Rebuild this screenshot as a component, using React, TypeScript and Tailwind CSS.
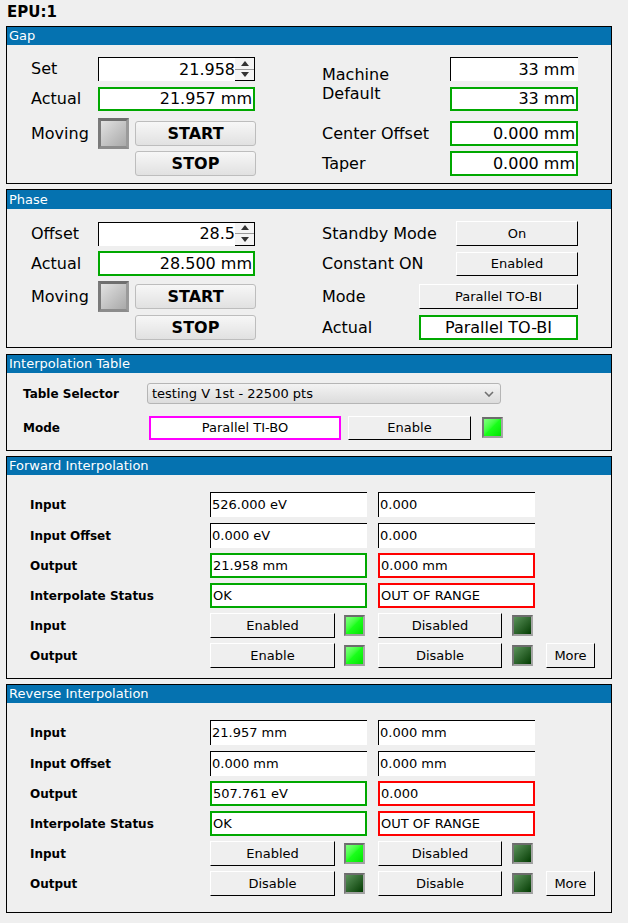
import React from 'react';

// Qt/PyDM style EPU control screen

function Panel({ title, tall = false, children }: { title: string; tall?: boolean; children: React.ReactNode }) {
  return (
    <div className="border border-black">
      <div
        className={`${tall ? 'h-[19px]' : 'h-[18px]'} bg-[#0572b0] text-white text-[13px] flex items-center pl-[2px]`}
      >
        {title}
      </div>
      {children}
    </div>
  );
}

function SpinBox({ value }: { value: string }) {
  return (
    <div className="flex h-[24px] w-[157px] bg-white border-t border-l border-black">
      <div className="flex-1 flex items-center justify-end text-[16px]">{value}</div>
      <div className="w-[20px] flex flex-col border-r border-black">
        <div className="flex-1 flex items-center justify-center bg-[#f4f4f4] border-b border-[#9a9a9a]">
          <svg width="8" height="5" viewBox="0 0 8 5">
            <path d="M0 5 L4 0 L8 5 Z" fill="#333" />
          </svg>
        </div>
        <div className="flex-1 flex items-center justify-center bg-[#f4f4f4] border-b border-black">
          <svg width="8" height="5" viewBox="0 0 8 5">
            <path d="M0 0 L4 5 L8 0 Z" fill="#333" />
          </svg>
        </div>
      </div>
    </div>
  );
}

function LineEdit({ value, className }: { value: string; className: string }) {
  return (
    <div className={`flex items-center bg-white border-t border-l border-black ${className}`}>{value}</div>
  );
}

function Readback({
  value,
  color,
  className,
}: {
  value: string;
  color: 'green' | 'red' | 'magenta';
  className: string;
}) {
  const border =
    color === 'green' ? 'border-[#00a800]' : color === 'red' ? 'border-[#ff0000]' : 'border-[#ff00ff]';
  return <div className={`flex items-center bg-white border-2 ${border} ${className}`}>{value}</div>;
}

function RaisedButton({ label, className }: { label: string; className: string }) {
  return (
    <div
      className={`flex items-center justify-center bg-[#efefef] border border-t-white border-l-white border-r-black border-b-black text-[13px] ${className}`}
    >
      {label}
    </div>
  );
}

function BigButton({ label }: { label: string }) {
  return (
    <div className="w-[121px] h-[25px] flex items-center justify-center rounded-[3px] border border-[#bdbdbd] bg-linear-to-b from-[#f7f7f7] to-[#e1e1e1] font-bold text-[16px]">
      {label}
    </div>
  );
}

function MovingLed() {
  return (
    <div className="w-[31px] h-[31px] border-[3px] border-t-[#6e6e6e] border-l-[#7a7a7a] border-r-[#9a9a9a] border-b-[#8c8c8c] bg-linear-to-br from-[#e2e2e2] to-[#a9a9a9]" />
  );
}

function Led({ on }: { on: boolean }) {
  return (
    <div
      className={`w-[21px] h-[21px] border-2 border-t-[#6c6c6c] border-l-[#767676] border-r-[#a6a6a6] border-b-[#a0a0a0] ${
        on
          ? 'bg-linear-to-br from-[#7dff7d] via-[#1aff1a] to-[#00e400]'
          : 'bg-linear-to-br from-[#5a935a] to-[#003d00]'
      }`}
    />
  );
}

interface InterpData {
  input: [string, string];
  offset: [string, string];
  output: [string, string];
  status: [string, string];
  inBtn: [string, string];
  inLed: [boolean, boolean];
  outBtn: [string, string];
  outLed: [boolean, boolean];
}

function InterpPanel({ title, data, bottomPad }: { title: string; data: InterpData; bottomPad: string }) {
  const label = 'w-[180px] font-bold text-[12px]';
  const field = 'w-[157px] h-[25px] text-[13px] pl-[1px]';
  return (
    <Panel title={title}>
      <div className={`pl-[23px] pt-[17px] ${bottomPad} flex flex-col`}>
        <div className="flex items-center h-[25px]">
          <span className={label}>Input</span>
          <LineEdit value={data.input[0]} className={field} />
          <LineEdit value={data.input[1]} className={`${field} ml-[11px]`} />
        </div>
        <div className="mt-[6px] flex items-center h-[25px]">
          <span className={label}>Input Offset</span>
          <LineEdit value={data.offset[0]} className={field} />
          <LineEdit value={data.offset[1]} className={`${field} ml-[11px]`} />
        </div>
        <div className="mt-[5px] flex items-center h-[25px]">
          <span className={label}>Output</span>
          <Readback value={data.output[0]} color="green" className={field} />
          <Readback value={data.output[1]} color="red" className={`${field} ml-[11px]`} />
        </div>
        <div className="mt-[5px] flex items-center h-[25px]">
          <span className={label}>Interpolate Status</span>
          <Readback value={data.status[0]} color="green" className={field} />
          <Readback value={data.status[1]} color="red" className={`${field} ml-[11px]`} />
        </div>
        <div className="mt-[5px] flex items-center h-[25px]">
          <span className={label}>Input</span>
          <RaisedButton label={data.inBtn[0]} className="w-[125px] h-[25px]" />
          <div className="ml-[9px]">
            <Led on={data.inLed[0]} />
          </div>
          <RaisedButton label={data.inBtn[1]} className="ml-[13px] w-[124px] h-[25px]" />
          <div className="ml-[10px]">
            <Led on={data.inLed[1]} />
          </div>
        </div>
        <div className="mt-[5px] flex items-center h-[25px]">
          <span className={label}>Output</span>
          <RaisedButton label={data.outBtn[0]} className="w-[125px] h-[25px]" />
          <div className="ml-[9px]">
            <Led on={data.outLed[0]} />
          </div>
          <RaisedButton label={data.outBtn[1]} className="ml-[13px] w-[124px] h-[25px]" />
          <div className="ml-[10px]">
            <Led on={data.outLed[1]} />
          </div>
          <RaisedButton label="More" className="ml-[13px] w-[49px] h-[25px]" />
        </div>
      </div>
    </Panel>
  );
}

export default function App() {
  const forward: InterpData = {
    input: ['526.000 eV', '0.000'],
    offset: ['0.000 eV', '0.000'],
    output: ['21.958 mm', '0.000 mm'],
    status: ['OK', 'OUT OF RANGE'],
    inBtn: ['Enabled', 'Disabled'],
    inLed: [true, false],
    outBtn: ['Enable', 'Disable'],
    outLed: [true, false],
  };
  const reverse: InterpData = {
    input: ['21.957 mm', '0.000 mm'],
    offset: ['0.000 mm', '0.000 mm'],
    output: ['507.761 eV', '0.000'],
    status: ['OK', 'OUT OF RANGE'],
    inBtn: ['Enabled', 'Disabled'],
    inLed: [true, false],
    outBtn: ['Disable', 'Disable'],
    outLed: [false, false],
  };

  return (
    <div className="w-[628px] h-[923px] bg-[#efefef] font-['DejaVu_Sans',sans-serif] text-black pl-[6px] pt-[3px] overflow-hidden">
      <div className="text-[15px] font-bold leading-[18px] pl-[1px]">EPU:1</div>

      <div className="mt-[5px] w-[606px] flex flex-col">
        {/* Gap */}
        <Panel title="Gap">
          <div className="flex pl-[24px] pt-[12px] pb-[7px] text-[16px]">
            <div className="w-[225px]">
              <div className="flex items-center h-[24px]">
                <span className="w-[67px]">Set</span>
                <SpinBox value="21.958" />
              </div>
              <div className="mt-[6px] flex items-center h-[24px]">
                <span className="w-[67px]">Actual</span>
                <Readback value="21.957 mm" color="green" className="w-[157px] h-[24px] justify-end pr-[1px]" />
              </div>
              <div className="mt-[7px] flex">
                <span className="w-[67px] h-[31px] flex items-center">Moving</span>
                <MovingLed />
                <div className="ml-[6px] pt-[3px] flex flex-col gap-[5px]">
                  <BigButton label="START" />
                  <BigButton label="STOP" />
                </div>
              </div>
            </div>
            <div className="ml-[66px]">
              <div className="flex">
                <div className="w-[128px] flex items-center leading-[19px]">
                  Machine
                  <br />
                  Default
                </div>
                <div className="flex flex-col gap-[6px]">
                  <LineEdit value="33 mm" className="w-[128px] h-[24px] justify-end pr-[3px]" />
                  <Readback value="33 mm" color="green" className="w-[128px] h-[24px] justify-end pr-[1px]" />
                </div>
              </div>
              <div className="mt-[10px] flex items-center h-[25px]">
                <span className="w-[128px]">Center Offset</span>
                <Readback value="0.000 mm" color="green" className="w-[128px] h-[25px] justify-end pr-[1px]" />
              </div>
              <div className="mt-[5px] flex items-center h-[25px]">
                <span className="w-[128px]">Taper</span>
                <Readback value="0.000 mm" color="green" className="w-[128px] h-[25px] justify-end pr-[1px]" />
              </div>
            </div>
          </div>
        </Panel>

        {/* Phase */}
        <div className="mt-[5px]">
          <Panel title="Phase" tall>
            <div className="flex pl-[24px] pt-[12px] pb-[7px] text-[16px]">
              <div className="w-[225px]">
                <div className="flex items-center h-[25px]">
                  <span className="w-[67px]">Offset</span>
                  <SpinBox value="28.5" />
                </div>
                <div className="mt-[5px] flex items-center h-[25px]">
                  <span className="w-[67px]">Actual</span>
                  <Readback value="28.500 mm" color="green" className="w-[157px] h-[25px] justify-end pr-[1px]" />
                </div>
                <div className="mt-[5px] flex">
                  <span className="w-[67px] h-[31px] flex items-center">Moving</span>
                  <MovingLed />
                  <div className="ml-[6px] pt-[3px] flex flex-col gap-[6px]">
                    <BigButton label="START" />
                    <BigButton label="STOP" />
                  </div>
                </div>
              </div>
              <div className="ml-[66px]">
                <div className="flex items-center h-[25px]">
                  <span className="w-[134px]">Standby Mode</span>
                  <RaisedButton label="On" className="w-[122px] h-[25px]" />
                </div>
                <div className="mt-[6px] flex items-center h-[24px]">
                  <span className="w-[134px]">Constant ON</span>
                  <RaisedButton label="Enabled" className="w-[122px] h-[24px]" />
                </div>
                <div className="mt-[8px] flex items-center h-[25px]">
                  <span className="w-[97px]">Mode</span>
                  <RaisedButton label="Parallel TO-BI" className="w-[159px] h-[25px]" />
                </div>
                <div className="mt-[6px] flex items-center h-[25px]">
                  <span className="w-[97px]">Actual</span>
                  <Readback value="Parallel TO-BI" color="green" className="w-[159px] h-[25px] justify-center" />
                </div>
              </div>
            </div>
          </Panel>
        </div>

        {/* Interpolation Table */}
        <div className="mt-[6px]">
          <Panel title="Interpolation Table">
            <div className="pl-[16px] pt-[10px] pb-[10px] text-[13px]">
              <div className="flex items-center h-[21px]">
                <span className="w-[124px] font-bold text-[12px]">Table Selector</span>
                <div className="w-[354px] h-[21px] flex items-center justify-between pl-[4px] pr-[6px] rounded-[3px] border border-[#b5b5b5] bg-linear-to-b from-[#f3f3f3] to-[#dcdcdc]">
                  <span>testing V 1st - 22500 pts</span>
                  <svg width="10" height="6" viewBox="0 0 10 6">
                    <path d="M1 1 L5 5 L9 1" stroke="#707070" strokeWidth="1.6" fill="none" />
                  </svg>
                </div>
              </div>
              <div className="mt-[11px] flex items-center h-[25px]">
                <span className="w-[126px] font-bold text-[12px]">Mode</span>
                <Readback value="Parallel TI-BO" color="magenta" className="w-[192px] h-[24px] justify-center" />
                <RaisedButton label="Enable" className="ml-[7px] w-[123px] h-[24px]" />
                <div className="ml-[11px]">
                  <Led on />
                </div>
              </div>
            </div>
          </Panel>
        </div>

        {/* Forward Interpolation */}
        <div className="mt-[5px]">
          <InterpPanel title="Forward Interpolation" data={forward} bottomPad="pb-[10px]" />
        </div>

        {/* Reverse Interpolation */}
        <div className="mt-[5px]">
          <InterpPanel title="Reverse Interpolation" data={reverse} bottomPad="pb-[16px]" />
        </div>
      </div>
    </div>
  );
}
